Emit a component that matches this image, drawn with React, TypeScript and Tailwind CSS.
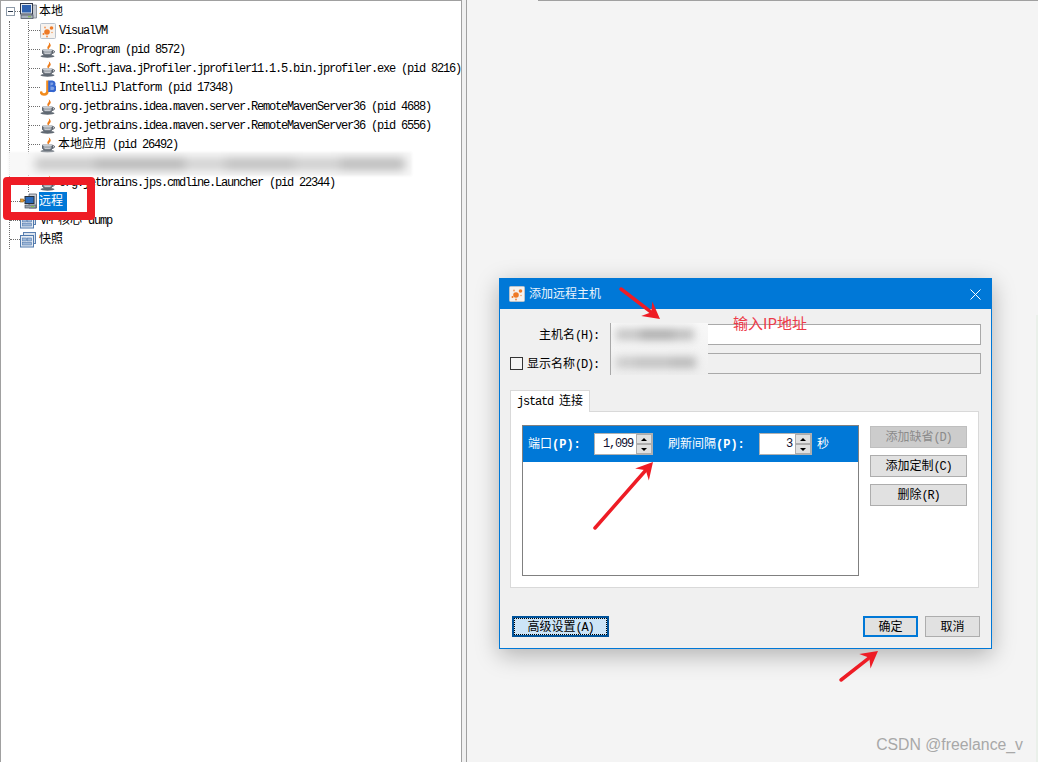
import type { ReactNode } from 'react';

// SimSun-like look: mono latin squeezed to 6px cells, CJK stays on a 12px grid
function T({ children, className = '', wide }: { children: string; className?: string; wide?: boolean }) {
  const parts = children.split(/([\u4e00-\u9fff]+)/);
  return (
    <span className={`whitespace-pre ${className}`}>
      {parts.map((p, i) =>
        /[\u4e00-\u9fff]/.test(p) ? (
          <span key={i}>{p}</span>
        ) : (
          <span key={i} className={wide ? 'font-bold' : 'tracking-[-1.2px]'}>{p}</span>
        ),
      )}
    </span>
  );
}

function ComputerIcon() {
  return (
    <svg width="17" height="17" viewBox="0 0 17 17" className="shrink-0">
      <path d="M12 2h4.5v13H12z" fill="#c3c8cf" stroke="#7a818c" strokeWidth="0.8" />
      <rect x="0.5" y="0.5" width="12" height="10.5" fill="#e4e9ef" stroke="#30384a" />
      <rect x="2" y="2" width="9" height="7.5" fill="#2f62b0" />
      <rect x="1" y="12" width="12" height="3.5" fill="#aab2bd" stroke="#4e5663" strokeWidth="0.8" />
      <rect x="8" y="13.2" width="3" height="1" fill="#7fc241" />
    </svg>
  );
}

function VisualVmIcon({ size = 16 }: { size?: number }) {
  return (
    <svg width={size} height={size} viewBox="0 0 16 16" className="shrink-0">
      <rect x="0.5" y="0.5" width="15" height="15" rx="1" fill="#f6f2ee" stroke="#b9c2cc" />
      <circle cx="7" cy="9" r="2.8" fill="#ee7a26" />
      <circle cx="11.5" cy="5" r="1.8" fill="#ee7a26" />
      <circle cx="5" cy="4.5" r="1" fill="#f3a064" />
      <circle cx="3.5" cy="11" r="1" fill="#ee7a26" />
      <circle cx="7" cy="13.5" r="1" fill="#f09050" />
      <circle cx="12" cy="9.5" r="0.8" fill="#f3a064" />
    </svg>
  );
}

function JavaIcon() {
  return (
    <svg width="16" height="16" viewBox="0 0 16 16" className="shrink-0">
      <path d="M8.5 0C10.5 3 6.5 4 7.5 6.5 8 7.5 9 8.2 9 8.2 8 6 11.2 5 10.7 3 10.4 1.8 9.5 0.8 8.5 0z" fill="#ee7d1c" />
      <path d="M2.5 8h10v3c0 1.4-2 2.3-5 2.3S2.5 12.4 2.5 11z" fill="#7d858e" stroke="#454d58" strokeWidth="0.8" />
      <path d="M4 10h7M4.5 11.6h6" stroke="#e3e6ea" strokeWidth="0.8" />
      <path d="M12.5 8.8h1.3c1 0 1 2.2-.6 2.2h-.7" fill="none" stroke="#454d58" />
      <ellipse cx="7.5" cy="14.2" rx="7" ry="1.5" fill="#5f6872" />
      <ellipse cx="7.5" cy="8.2" rx="5" ry="1" fill="#c9ced4" />
    </svg>
  );
}

function IntellijIcon() {
  return (
    <svg width="16" height="16" viewBox="0 0 16 16" className="shrink-0">
      <path d="M7.5 0.5v10C7.5 13 6 14.5 4 14.5S1 13.2 0.8 11.5" fill="none" stroke="#f28c1e" strokeWidth="2.6" />
      <path d="M9.3 1.5h3a2.2 2.2 0 0 1 .8 4.2A2.5 2.5 0 0 1 12.5 11H9.3z" fill="#7ea0e4" stroke="#3566cf" strokeWidth="2.2" />
    </svg>
  );
}

function RemoteIcon() {
  return (
    <svg width="17" height="17" viewBox="0 0 17 17" className="shrink-0">
      <path d="M9 1h7.5v14H9z" fill="#c7ccd3" stroke="#59616d" strokeWidth="0.8" />
      <rect x="5" y="3.5" width="9" height="7" fill="#2c6ab8" stroke="#28303a" />
      <rect x="5" y="12" width="11" height="3" fill="#99a1ab" stroke="#4e5663" strokeWidth="0.7" />
      <rect x="11" y="13" width="3" height="1" fill="#7fc241" />
      <rect x="0.5" y="6" width="3" height="3" fill="#ee9a2e" stroke="#8a5a16" strokeWidth="0.6" />
      <path d="M3.5 7.5H5" stroke="#8a5a16" />
    </svg>
  );
}

function SnapshotIcon() {
  return (
    <svg width="16" height="16" viewBox="0 0 16 16" className="shrink-0">
      <rect x="3.5" y="0.5" width="12" height="11" fill="#dce4ee" stroke="#5a7fb0" />
      <rect x="0.5" y="3.5" width="13" height="11.5" fill="#e8edf4" stroke="#4f79ad" />
      <rect x="2.5" y="6" width="4" height="3" fill="#9fb8d8" stroke="#4f79ad" strokeWidth="0.6" />
      <rect x="7.5" y="6" width="4" height="3" fill="#9fb8d8" stroke="#4f79ad" strokeWidth="0.6" />
      <rect x="2.5" y="10.5" width="9" height="2.5" fill="#9fb8d8" stroke="#4f79ad" strokeWidth="0.6" />
    </svg>
  );
}

function Row({ icon, text, link, last }: { icon: ReactNode; text: ReactNode; link: string; last?: boolean }) {
  return (
    <div className={`flex h-[19px] items-center ${last ? '-mb-[9px]' : ''}`}>
      <span className={`${link} shrink-0 border-t border-dotted border-[#6d6d6d]`} />
      {icon}
      {text}
    </div>
  );
}

const javaRows = [
  'D:.Program (pid 8572)',
  'H:.Soft.java.jProfiler.jprofiler11.1.5.bin.jprofiler.exe (pid 8216)',
];

const smudges = [
  'w-[60px] bg-[#c6c6c6]',
  'w-[90px] bg-[#b4b4b4]',
  'w-[40px] bg-[#d0d0d0]',
  'w-[70px] bg-[#bcbcbc]',
  'w-[45px] bg-[#cccccc]',
  'w-[65px] bg-[#b8b8b8]',
];

function Tree() {
  return (
    <div className="relative h-full pl-[5px] pt-px">
      <div className="flex h-[19px] items-center">
        <span className="flex h-[9px] w-[9px] shrink-0 items-center justify-center border border-[#8d9aa8] bg-white">
          <span className="h-px w-[5px] bg-[#2b3a4d]" />
        </span>
        <span className="w-[5px] shrink-0 border-t border-dotted border-[#6d6d6d]" />
        <ComputerIcon />
        <T className="ml-[2px] pt-px">本地</T>
      </div>
      <div className="ml-[3px] border-l border-dotted border-[#6d6d6d]">
        <div className="ml-[18px] border-l border-dotted border-[#6d6d6d]">
          <Row link="w-[11px]" icon={<VisualVmIcon />} text={<T className="ml-[3px]">VisualVM</T>} />
          {javaRows.map((r) => (
            <Row key={r} link="w-[11px]" icon={<JavaIcon />} text={<T className="ml-[3px]">{r}</T>} />
          ))}
          <Row link="w-[11px]" icon={<IntellijIcon />} text={<T className="ml-[3px]">IntelliJ Platform (pid 17348)</T>} />
          <Row link="w-[11px]" icon={<JavaIcon />} text={<T className="ml-[3px]">org.jetbrains.idea.maven.server.RemoteMavenServer36 (pid 4688)</T>} />
          <Row link="w-[11px]" icon={<JavaIcon />} text={<T className="ml-[3px]">org.jetbrains.idea.maven.server.RemoteMavenServer36 (pid 6556)</T>} />
          <Row link="w-[11px]" icon={<JavaIcon />} text={<T className="ml-[2px]">本地应用 (pid 26492)</T>} />
          <div className="h-[19px]" />
          <Row link="w-[11px]" icon={<JavaIcon />} text={<T className="ml-[3px]">org.jetbrains.jps.cmdline.Launcher (pid 22344)</T>} last />
        </div>
        <div className="mt-[9px]" />
        <Row
          link="w-[10px]"
          icon={<RemoteIcon />}
          text={<span className="ml-[2px] flex h-[19px] w-[28px] items-center bg-[#0078d7] pt-px text-white">远程</span>}
        />
        <Row link="w-[10px]" icon={<SnapshotIcon />} text={<T className="ml-[4px]">VM 核心 dump</T>} />
        <Row link="w-[10px]" icon={<SnapshotIcon />} text={<T className="ml-[3px] pt-px">快照</T>} last />
      </div>

      {/* blurred-out process row */}
      <div className="absolute left-[7px] top-[151px] h-[24px] w-[404px] overflow-hidden bg-[#f8f8f8] blur-[1px]">
        <div className="ml-[27px] mt-[6px] flex h-[12px] blur-[5px]">
          {smudges.map((s) => (
            <span key={s} className={s} />
          ))}
        </div>
      </div>
      {/* red marker around the remote node */}
      <div className="absolute left-[2px] top-[176px] h-[43px] w-[92px] rounded-[4px] border-[8px] border-[#ee1c25]" />
    </div>
  );
}

function Spinner({ value, width }: { value: string; width: string }) {
  return (
    <div className={`flex h-[22px] ${width} border border-[#b0b0b0] bg-white`}>
      <div className="flex flex-1 items-center justify-end pr-[3px] text-[#101030]">
        <T>{value}</T>
      </div>
      <div className="flex w-[16px] flex-col">
        <span className="flex flex-1 items-center justify-center border border-[#adadad] bg-[#e1e1e1]">
          <span className="h-0 w-0 border-x-[3px] border-b-[3px] border-x-transparent border-b-black" />
        </span>
        <span className="flex flex-1 items-center justify-center border border-[#adadad] bg-[#e1e1e1]">
          <span className="h-0 w-0 border-x-[3px] border-t-[3px] border-x-transparent border-t-black" />
        </span>
      </div>
    </div>
  );
}

function SideButton({ label, disabled, className = '' }: { label: string; disabled?: boolean; className?: string }) {
  return (
    <div
      className={`flex h-[22px] w-[97px] items-center justify-center border pt-[2px] ${
        disabled ? 'border-[#bfbfbf] bg-[#cccccc] text-[#8a8a8a]' : 'border-[#adadad] bg-[#e1e1e1]'
      } ${className}`}
    >
      <T>{label}</T>
    </div>
  );
}

function Dialog() {
  return (
    <div className="relative h-[371px] w-[493px] border border-[#0078d7] bg-[#f0f0f0] shadow-[0_6px_22px_rgba(0,0,0,0.28)]">
      <div className="flex h-[30px] items-center bg-[#0078d7] pl-[9px] pr-[10px] text-[#eaf4fc]">
        <VisualVmIcon />
        <span className="ml-[4px] pt-px">添加远程主机</span>
        <svg width="11" height="11" viewBox="0 0 11 11" className="ml-auto">
          <path d="M0.5 0.5l10 10M10.5 0.5l-10 10" stroke="#fff" />
        </svg>
      </div>

      <div className="mt-[15px] flex h-[21px] items-center">
        <div className="w-[110px] pr-[11px] pt-[2px] text-right">
          <T>主机名(H):</T>
        </div>
        <div className="h-[21px] w-[371px] border border-[#a9a9a9] bg-white" />
      </div>
      <div className="mt-[8px] flex h-[21px] items-center pl-[10px]">
        <span className="h-[13px] w-[13px] shrink-0 border border-[#333] bg-[#f4f4f4]" />
        <T className="ml-[4px] w-[83px] pt-[2px]">显示名称(D):</T>
        <div className="h-[21px] w-[371px] border border-[#a9a9a9]" />
      </div>
      {/* blurred host fields */}
      <div className="absolute left-[110px] top-[44px] h-[52px] w-[98px] overflow-hidden border-l border-[#a9a9a9] bg-gradient-to-b from-[#f8f8f8] to-[#efefef]">
        <div className="ml-[5px] mt-[6px] flex h-[11px] blur-[4px]">
          <span className="w-[24px] bg-[#c4c4c4]" />
          <span className="w-[34px] bg-[#acacac]" />
          <span className="w-[20px] bg-[#bdbdbd]" />
        </div>
        <div className="ml-[5px] mt-[17px] flex h-[11px] blur-[4px]">
          <span className="w-[18px] bg-[#cacaca]" />
          <span className="w-[36px] bg-[#c0c0c0]" />
          <span className="w-[26px] bg-[#b8b8b8]" />
        </div>
      </div>

      <div className="relative z-10 ml-[10px] mt-[16px] flex h-[22px] w-[80px] items-center justify-center border border-b-0 border-[#d9d9d9] bg-white">
        <T>jstatd 连接</T>
      </div>
      <div className="-mt-px ml-[10px] flex h-[177px] w-[469px] border border-[#d9d9d9] bg-white pl-[11px] pt-[13px]">
        <div className="h-[151px] w-[337px] border border-[#808080]">
          <div className="flex h-[36px] items-center bg-[#0078d7] pl-[5px] text-white">
            <T wide className="w-[66px] pt-[2px]">端口(P):</T>
            <Spinner value="1,099" width="w-[59px]" />
            <T wide className="ml-[15px] w-[91px] pt-[2px]">刷新间隔(P):</T>
            <Spinner value="3" width="w-[53px]" />
            <span className="ml-[5px] pt-[2px]">秒</span>
          </div>
        </div>
        <div className="ml-[11px] mt-px flex flex-col gap-[7px]">
          <SideButton label="添加缺省(D)" disabled />
          <SideButton label="添加定制(C)" />
          <SideButton label="删除(R)" />
        </div>
      </div>

      <div className="mt-[28px] flex items-center pl-[12px] pr-[11px]">
        <div className="flex h-[21px] w-[97px] items-center justify-center border-2 border-[#00539b] bg-[#cce4f7] pt-[2px] outline-1 -outline-offset-3 outline-dotted outline-black">
          <T>高级设置(A)</T>
        </div>
        <div className="ml-auto flex h-[21px] w-[55px] items-center justify-center border-2 border-[#0078d7] bg-[#e1e1e1] pt-[2px]">
          确定
        </div>
        <div className="ml-[7px] flex h-[21px] w-[55px] items-center justify-center border border-[#adadad] bg-[#e1e1e1] pt-[2px]">
          取消
        </div>
      </div>
    </div>
  );
}

// red hand-drawn annotation arrow, from tail to tip
function Arrow({ x1, y1, x2, y2 }: { x1: number; y1: number; x2: number; y2: number }) {
  const a = Math.atan2(y2 - y1, x2 - x1);
  const back = (r: number, d: number) => `${x2 - r * Math.cos(a + d)},${y2 - r * Math.sin(a + d)}`;
  const neck = [x2 - 12 * Math.cos(a), y2 - 12 * Math.sin(a)];
  return (
    <g>
      <line x1={x1} y1={y1} x2={neck[0]} y2={neck[1]} stroke="#ee1c25" strokeWidth="3.5" strokeLinecap="round" />
      <polygon points={`${x2},${y2} ${back(19, 0.5)} ${back(11, 0)} ${back(19, -0.5)}`} fill="#ee1c25" />
    </g>
  );
}

export default function App() {
  return (
    <div className="relative flex h-[762px] w-[1038px] overflow-hidden bg-[#f4f4f4] font-['Liberation_Mono','Noto_Sans_CJK_SC',monospace] text-[12px] leading-none text-black">
      <aside className="h-full w-[462px] shrink-0 border-l border-r border-t border-[#a0a0a0] bg-white">
        <Tree />
      </aside>
      <div className="h-full w-[5px] shrink-0 border-r border-[#a0a0a0] bg-[#f0f0f0]" />
      <main className="flex-1">
        <div className="ml-[71px] h-px bg-[#a0a0a0]" />
        <div className="pl-[32px] pt-[277px]">
          <Dialog />
        </div>
      </main>

      <span className="absolute left-[733px] top-[314px] font-['Noto_Sans_CJK_SC','Liberation_Sans',sans-serif] text-[15px] leading-[18px] text-[#ec3a48]">
        输入IP地址
      </span>
      <span className="absolute bottom-[8px] right-[15px] font-['Liberation_Sans',sans-serif] text-[15.8px] leading-[18px] text-[#a8a8a8]">
        CSDN @freelance_v
      </span>
      <div className="absolute bottom-0 right-0 top-[315px] w-[2px] bg-[#eaf0ea]" />
      <svg width="1038" height="762" className="pointer-events-none absolute left-0 top-0">
        <Arrow x1={621} y1={289} x2={660} y2={319} />
        <Arrow x1={595} y1={528} x2={653} y2={462} />
        <Arrow x1={841} y1={680} x2={878} y2={651} />
      </svg>
    </div>
  );
}
